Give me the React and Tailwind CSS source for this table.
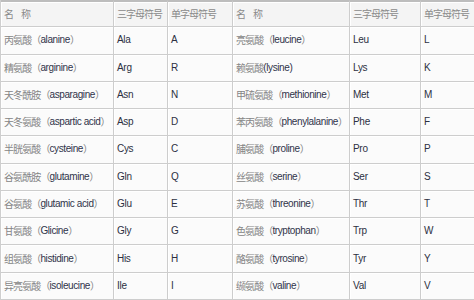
const left = [
  ["丙氨酸", "（alanine）", "Ala", "A"],
  ["精氨酸", "（arginine）", "Arg", "R"],
  ["天冬酰胺", "（asparagine）", "Asn", "N"],
  ["天冬氨酸", "（aspartic acid）", "Asp", "D"],
  ["半胱氨酸", "（cysteine）", "Cys", "C"],
  ["谷氨酰胺", "（glutamine）", "Gln", "Q"],
  ["谷氨酸", "（glutamic acid）", "Glu", "E"],
  ["甘氨酸", "（Glicine）", "Gly", "G"],
  ["组氨酸", "（histidine）", "His", "H"],
  ["异亮氨酸", "（isoleucine）", "Ile", "I"],
];

const right = [
  ["亮氨酸", "（leucine）", "Leu", "L"],
  ["赖氨酸", "(lysine)", "Lys", "K"],
  ["甲硫氨酸", "（methionine）", "Met", "M"],
  ["苯丙氨酸", "（phenylalanine）", "Phe", "F"],
  ["脯氨酸", "（proline）", "Pro", "P"],
  ["丝氨酸", "（serine）", "Ser", "S"],
  ["苏氨酸", "（threonine）", "Thr", "T"],
  ["色氨酸", "（tryptophan）", "Trp", "W"],
  ["酪氨酸", "（tyrosine）", "Tyr", "Y"],
  ["缬氨酸", "（valine）", "Val", "V"],
];

const cell =
  "flex items-center pl-[3px] whitespace-nowrap overflow-hidden border-r border-b border-[#cdcdcd] shadow-[inset_1px_1px_0_#ffffff]";

const zhCls =
  "text-[#858585] tracking-[-0.9px] font-['Noto_Sans_CJK_SC',sans-serif]";
const enCls =
  "text-[#30344a] tracking-[-0.4px] font-['Liberation_Sans',sans-serif]";

const Name = ({ zh, en }) => (
  <div className={`${cell} bg-[#fbfbfb]`}>
    <span className={zhCls}>{zh}</span>
    {en.startsWith("(") ? (
      <span className={enCls}>{en}</span>
    ) : (
      <>
        <span className={zhCls}>（</span>
        <span className={enCls}>{en.slice(1, -1)}</span>
        <span className={zhCls}>）</span>
      </>
    )}
  </div>
);

const Code = ({ children }) => (
  <div className={`${cell} bg-[#fbfbfb] text-[#2c3042] tracking-[-0.3px] font-['Liberation_Sans',sans-serif]`}>
    {children}
  </div>
);

const Head = ({ children }) => (
  <div
    className={`${cell} border-t-2 border-t-[#bdbdbd] bg-[#f4f4f4] text-[#8a8a8a] tracking-[-1px] font-['Noto_Sans_CJK_SC',sans-serif]`}
  >
    {children}
  </div>
);

const NameHead = () => (
  <Head>
    <span>名</span>
    <span className="ml-[8px]">称</span>
  </Head>
);

export default function App() {
  return (
    <div className="w-[474px] h-[300px] bg-white overflow-hidden">
      <div className="grid grid-cols-[113px_54px_65px_117px_71px_54px] grid-rows-[repeat(11,minmax(0,1fr))] h-[300px] border-l border-[#cfcfcf] text-[10px] leading-none">
        <NameHead />
        <Head>三字母符号</Head>
        <Head>单字母符号</Head>
        <NameHead />
        <Head>三字母符号</Head>
        <Head>单字母符号</Head>
        {left.map((l, i) => {
          const r = right[i];
          return [
            <Name key={`a${i}`} zh={l[0]} en={l[1]} />,
            <Code key={`b${i}`}>{l[2]}</Code>,
            <Code key={`c${i}`}>{l[3]}</Code>,
            <Name key={`d${i}`} zh={r[0]} en={r[1]} />,
            <Code key={`e${i}`}>{r[2]}</Code>,
            <Code key={`f${i}`}>{r[3]}</Code>,
          ];
        })}
      </div>
    </div>
  );
}
